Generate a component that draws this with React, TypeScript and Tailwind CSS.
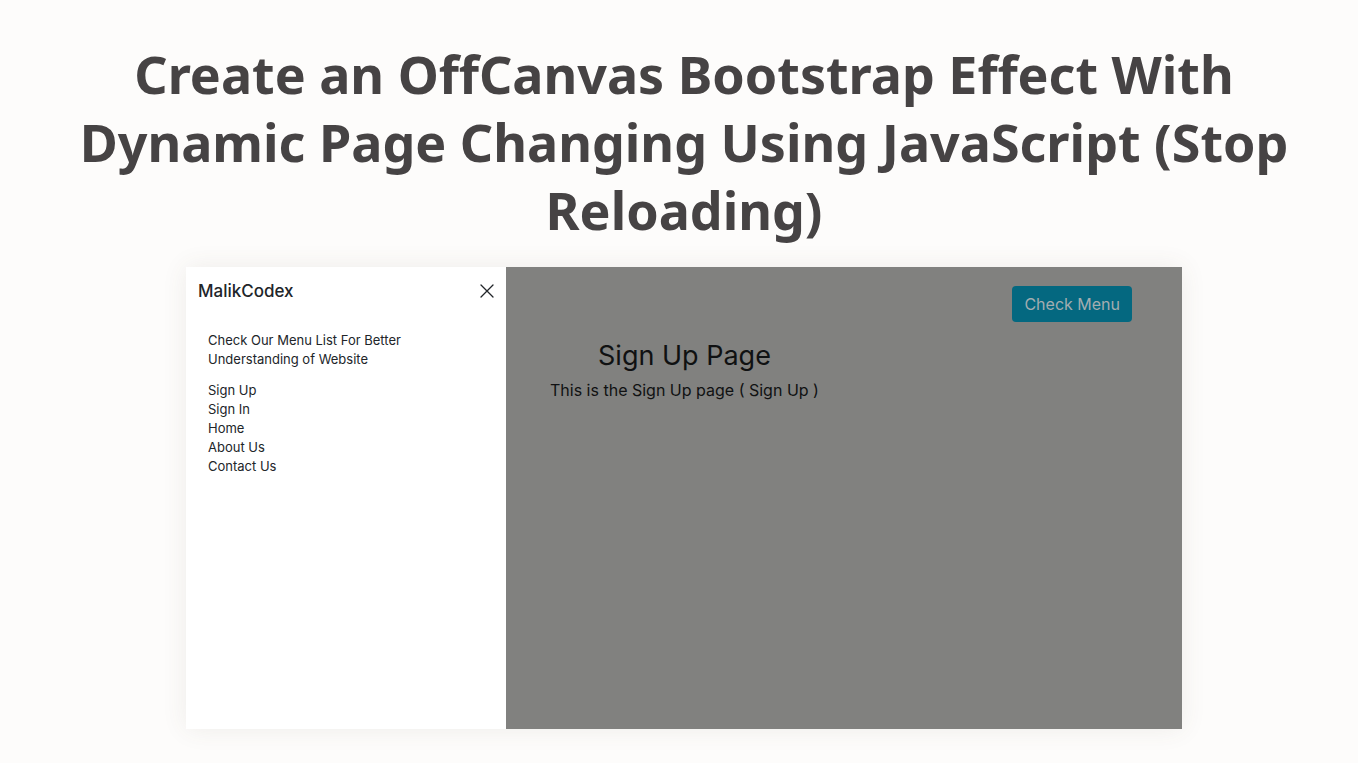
import { useState } from 'react'

interface Page {
  name: string
  title: string
  text: string
}

const PAGES: Page[] = [
  { name: 'Sign Up', title: 'Sign Up Page', text: 'This is the Sign Up page ( Sign Up )' },
  { name: 'Sign In', title: 'Sign In Page', text: 'This is the Sign In page ( Sign In )' },
  { name: 'Home', title: 'Home Page', text: 'This is the Home page ( Home )' },
  { name: 'About Us', title: 'About Us Page', text: 'This is the About Us page ( About Us )' },
  { name: 'Contact Us', title: 'Contact Us Page', text: 'This is the Contact Us page ( Contact Us )' },
]

interface OffCanvasProps {
  onSelect: (page: Page) => void
  onClose: () => void
}

function OffCanvas({ onSelect, onClose }: OffCanvasProps) {
  return (
    <aside className="w-80 shrink-0 bg-white text-[#212529]">
      <div className="flex items-center justify-between px-3 pt-3">
        <h2 className="text-[17px] leading-6 font-medium">MalikCodex</h2>
        <button type="button" aria-label="Close" onClick={onClose}>
          <svg width="14" height="24" viewBox="0 0 14 24" fill="none" stroke="#212529" strokeWidth="1.3" strokeLinecap="round">
            <path d="M1 6 L13 18 M13 6 L1 18" />
          </svg>
        </button>
      </div>

      <div className="px-[22px] pt-7 text-[13px] leading-[19px]">
        <p className="max-w-52">Check Our Menu List For Better Understanding of Website</p>
        <ul className="mt-3">
          {PAGES.map((page) => (
            <li key={page.name}>
              <a
                href="#"
                onClick={(e) => {
                  e.preventDefault()
                  onSelect(page)
                }}
              >
                {page.name}
              </a>
            </li>
          ))}
        </ul>
      </div>
    </aside>
  )
}

export default function App() {
  const [open, setOpen] = useState(true)
  const [page, setPage] = useState(PAGES[0])

  return (
    <div className="min-h-screen bg-[#fdfcfb] pt-10 pb-8 pl-[10px] font-['Inter',sans-serif]">
      <h1 className="mx-auto max-w-[1260px] text-center font-['Noto_Sans',sans-serif] text-[52px] leading-[68px] font-bold text-[#464344]">
        Create an OffCanvas Bootstrap Effect With Dynamic Page Changing Using JavaScript (Stop Reloading)
      </h1>

      <div className="mx-auto mt-[23px] flex min-h-[462px] w-full max-w-[996px] shadow-[0_0_24px_rgba(90,80,60,0.09)]">
        {open && <OffCanvas onSelect={setPage} onClose={() => setOpen(false)} />}

        <main className="flex-1 bg-[#81817f] text-[#101112]">
          <div className="flex justify-end pt-[19px] pr-[50px]">
            <button
              type="button"
              className="rounded bg-[#046880] px-3 py-1.5 text-base leading-6 text-[#a3adb0]"
              onClick={() => setOpen(true)}
            >
              Check Menu
            </button>
          </div>
          <div className="flex pt-4 pl-11">
            <div className="text-center">
              <h2 className="text-[27px] leading-9">{page.title}</h2>
              <p className="text-base leading-8">{page.text}</p>
            </div>
          </div>
        </main>
      </div>
    </div>
  )
}
